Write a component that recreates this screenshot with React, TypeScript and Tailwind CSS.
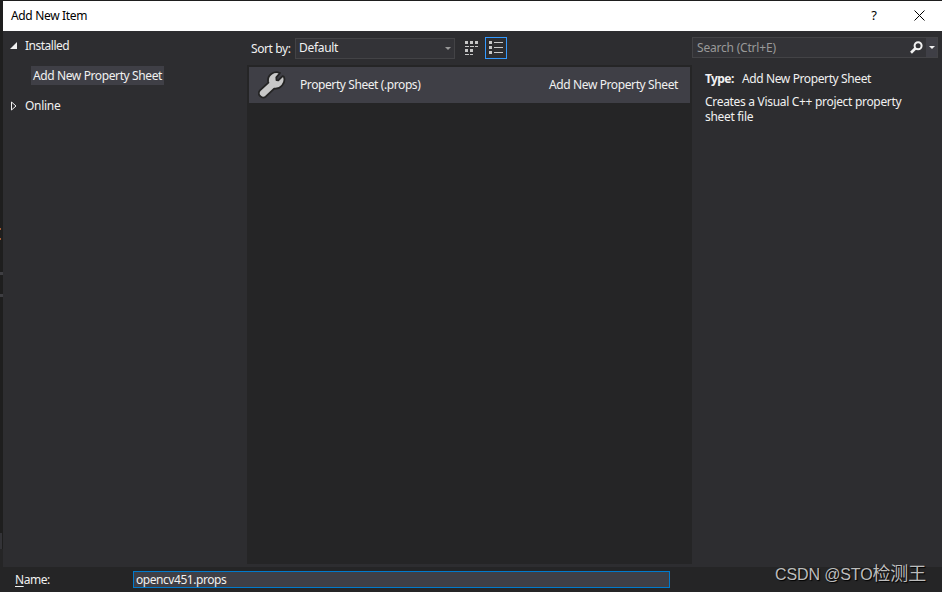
import type { ReactNode } from 'react';

const ITEMS = [
    { name: 'Property Sheet (.props)', category: 'Add New Property Sheet' },
];

function WrenchIcon() {
    return (
        <svg width="28" height="28" viewBox="0 0 28 28" className="shrink-0">
            <path
                d="M22 2C16.2-.5 9.2 3.8 10.1 10.4L10.4 11.6L1.7 19.7C-1.2 23.4 3.9 28.4 7.7 25.7L16.2 17.6C22.2 18.5 28 12.3 26 6.1L24.6 5.1L20.3 9.3L18.5 9.1L18.3 6.3Z"
                fill="#c8c8c8"
                stroke="#242424"
                strokeWidth="1.8"
                strokeLinejoin="round"
            />
        </svg>
    );
}

function SmallIconsIcon() {
    return (
        <svg width="14" height="14" viewBox="0 0 14 14" fill="#c8c8c8" shapeRendering="crispEdges">
            <path d="M0 0h3v3H0zM5 0h3v3H5zM10 0h3v3h-3zM0 5h4v1H0zM5 5h4v1H5zM10 5h3v1h-3zM0 8h3v3H0zM5 8h3v3H5zM0 13h4v1H0zM5 13h3v1H5z" />
        </svg>
    );
}

function ListIcon() {
    return (
        <svg width="14" height="14" viewBox="0 0 14 14" fill="#c8c8c8" shapeRendering="crispEdges">
            <path d="M0 0h3v3H0zM5 1h9v1H5zM0 5h3v3H0zM5 6h9v1H5zM0 10h3v3H0zM5 11h9v1H5z" />
        </svg>
    );
}

function SearchIcon() {
    return (
        <svg width="13" height="13" viewBox="0 0 13 13" fill="none" stroke="#f1f1f1">
            <circle cx="8.1" cy="4.7" r="3.5" strokeWidth="2" />
            <path d="M5.5 7.3L1 11.8" strokeWidth="2.7" />
        </svg>
    );
}

function TitleBar() {
    return (
        <header className="flex h-[30px] shrink-0 items-center bg-white pl-2 pr-[17px] text-black">
            <h1 className="grow tracking-[-0.34px]">Add New Item</h1>
            <button className="mr-[36px] w-2 text-[13px]">?</button>
            <button aria-label="Close" className="pb-0.5">
                <svg width="11" height="11" viewBox="0 0 11 11" fill="none" stroke="#000">
                    <path d="M.5.5l10 10M10.5.5l-10 10" />
                </svg>
            </button>
        </header>
    );
}

function TreeNode({ label, open }: { label: ReactNode; open?: boolean }) {
    return (
        <div className="flex h-[30px] items-center">
            <svg width="8" height="10" viewBox="0 0 8 10" className="mr-[7px]">
                {open
                    ? <path d="M7 1v7H0z" fill="#f1f1f1" />
                    : <path d="M1.5 1v8L6 5z" fill="none" stroke="#f1f1f1" />}
            </svg>
            {label}
        </div>
    );
}

function Sidebar() {
    return (
        <nav className="w-[244px] shrink-0 pl-[7px]">
            <TreeNode open label={<span className="tracking-[-0.5px]">Installed</span>} />
            <div className="flex h-[30px] items-center pb-px pl-[21px]">
                <span className="h-[19px] w-[133px] bg-[#3f3f46] pl-0.5 leading-[19px] tracking-[-0.39px] whitespace-nowrap">Add New Property Sheet</span>
            </div>
            <TreeNode label={<span className="tracking-[-0.3px]">Online</span>} />
        </nav>
    );
}

function TemplateList() {
    return (
        <section className="flex w-[445px] shrink-0 flex-col pb-[3px]">
            <div className="flex h-[34px] items-center pl-1">
                <span className="w-[44px] pt-0.5 tracking-[-0.4px]">Sort by:</span>
                <div className="flex h-[21px] w-[160px] items-center justify-between border border-[#434346] bg-[#333337] pl-[3px] pr-[3px]">
                    <span className="tracking-[-0.3px]">Default</span>
                    <svg width="6" height="3" viewBox="0 0 6 3"><path d="M0 0h6L3 3z" fill="#999" /></svg>
                </div>
                <button aria-label="Small icons" className="ml-2.5"><SmallIconsIcon /></button>
                <button aria-label="List" className="ml-1.5 flex size-[22px] items-center justify-center border border-[#3399ff]"><ListIcon /></button>
            </div>
            <ul className="grow bg-[#252526] pt-0.5 pr-0.5 pl-0.5">
                {ITEMS.map(item => (
                    <li key={item.name} className="flex h-9 items-center bg-[#3f3f46] pr-3 pl-[9px]">
                        <WrenchIcon />
                        <span className="ml-3.5 grow tracking-[-0.41px]">{item.name}</span>
                        <span className="tracking-[-0.39px]">{item.category}</span>
                    </li>
                ))}
            </ul>
        </section>
    );
}

function Details() {
    return (
        <aside className="grow pt-1.5">
            <div className="flex h-[21px] w-[246px] border border-[#434346] bg-[#333337]">
                <span className="grow pl-1 leading-[19px] tracking-[-0.2px] text-[#999]">Search (Ctrl+E)</span>
                <button aria-label="Search" className="mr-[3px]"><SearchIcon /></button>
                <button aria-label="Search options" className="flex w-[11px] items-center justify-center bg-[#3f3f46]">
                    <svg width="6" height="3" viewBox="0 0 6 3"><path d="M0 0h6L3 3z" fill="#f1f1f1" /></svg>
                </button>
            </div>
            <div className="pt-[13px] pl-[13px] leading-[15px]">
                <p className="flex h-[15px] whitespace-nowrap">
                    <b className="w-[37px] tracking-[-0.6px]">Type:</b>
                    <span className="tracking-[-0.39px]">Add New Property Sheet</span>
                </p>
                <p className="mt-2 whitespace-nowrap tracking-[-0.31px]">
                    Creates a Visual C++ project property
                    <br />
                    sheet file
                </p>
            </div>
        </aside>
    );
}

function NameBar() {
    return (
        <footer className="flex h-[25px] shrink-0 items-center bg-[#252526] pl-3">
            <label htmlFor="name" className="w-[118px] pt-px tracking-[-0.45px]"><u className="underline-offset-2">N</u>ame:</label>
            <input
                id="name"
                defaultValue="opencv451.props"
                className="h-[17px] w-[537px] border border-[#007acc] bg-[#3f3f46] pt-px pl-0.5 tracking-[-0.45px] outline-none"
            />
        </footer>
    );
}

export default function App() {
    return (
        <div className="relative flex h-[592px] w-[942px] overflow-hidden bg-[#1e1e1e] font-['Noto_Sans','Noto_Sans_CJK_SC',sans-serif] text-[12px] text-[#f1f1f1]">
            {/* Edge of the editor window behind the dialog */}
            <div className="w-[3px] shrink-0">
                <div className="mt-[228px] h-0.5 w-px bg-[#a85c32]" />
                <div className="mt-2 h-0.5 w-px bg-[#a85c32]" />
                <div className="mt-8 h-[3px] w-[3px] bg-[#3e3e42]" />
                <div className="mt-[19px] h-[3px] w-[3px] bg-[#3e3e42]" />
                <div className="mt-[236px] h-4 w-0.5 bg-[#333337]" />
                <div className="h-[43px] bg-[#252526]" />
            </div>
            <div className="flex grow flex-col pt-px">
                <TitleBar />
                <main className="flex h-[536px] shrink-0 bg-[#2d2d30]">
                    <Sidebar />
                    <TemplateList />
                    <Details />
                </main>
                <NameBar />
            </div>
            {/* Watermark */}
            <span className="absolute top-[563px] left-[775px] font-['Liberation_Sans','Noto_Sans_CJK_SC',sans-serif] text-[16px] leading-[22px] tracking-[-0.12px] whitespace-nowrap text-[#bdbdbd] [text-shadow:1px_1px_1px_#000]">
                CSDN @STO<span className="text-[18px] tracking-[-0.2px]">检测王</span>
            </span>
        </div>
    );
}
